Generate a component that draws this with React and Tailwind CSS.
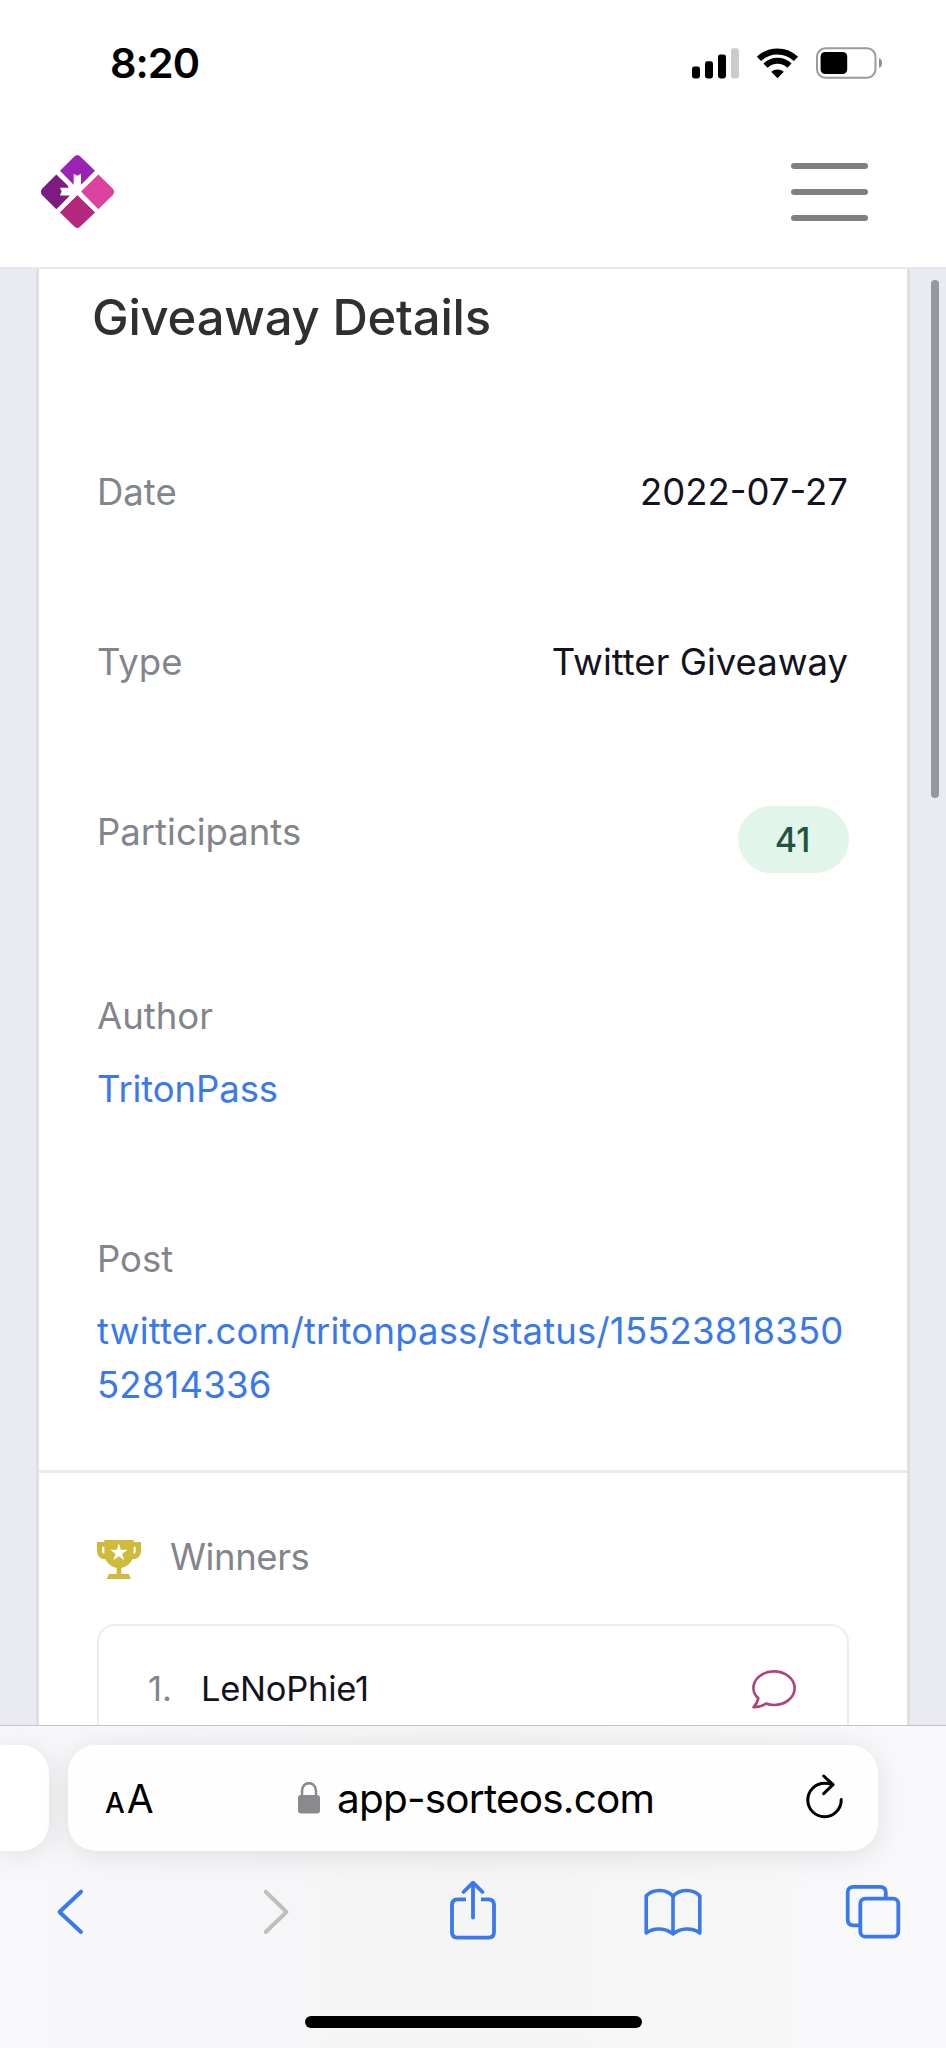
import React from "react";

const details = [
  { label: "Date", value: "2022-07-27" },
  { label: "Type", value: "Twitter Giveaway" },
];

const winners = [{ id: 1, name: "LeNoPhie1" }];

const StatusBar = () => (
  <div className="h-[126px] pl-[110px] pr-[64px] flex items-center justify-between text-black">
    <span className="text-[41.5px] leading-[50px] font-semibold tracking-[-1px]">8:20</span>
    <svg width="190" height="32" viewBox="0 0 190 32">
      <rect x="0" y="19.5" width="8" height="12" rx="2.4" />
      <rect x="13" y="14.3" width="8" height="17.2" rx="2.4" />
      <rect x="26" y="7.5" width="8" height="24" rx="2.4" />
      <rect x="39" y="1.3" width="8" height="30.2" rx="2.4" fill="#cbcbcb" />
      <g fill="none" stroke="#000" strokeWidth="6">
        <path d="M67 11.9A26.6 26.6 0 0 1 104 11.9" />
        <path d="M73.5 18.6A17.2 17.2 0 0 1 97.5 18.6" />
      </g>
      <path d="M85.5 31.2L79.2 24.8A9.5 9.5 0 0 1 91.8 24.8Z" />
      <rect x="125" y="1.3" width="58.5" height="29.5" rx="8.5" fill="none" stroke="#9b9b9b" strokeWidth="2" />
      <rect x="128.6" y="5" width="26.6" height="22" rx="4.5" />
      <path d="M187 11C189.5 12 190 14 190 16C190 18 189.5 20 187 21Z" fill="#8f8f8f" />
    </svg>
  </div>
);

const Logo = () => (
  <svg width="75" height="75" viewBox="120 462.5 225 225">
    <path d="M180 513L223 470Q232 461 241 470L285 513L232 566Z" fill="#9a23b5" />
    <path d="M169 524L222 575L169 628L127 586Q118 576 127 566Z" fill="#7d1c7e" />
    <path d="M295 524L338 566Q347 576 338 586L295 628L243 575Z" fill="#dc429d" />
    <path d="M232 586L285 638L241 680Q232 689 223 680L180 638Z" fill="#b4297f" />
    <path d="M221 522L232 528L243 522V555L252 560L216 598L208 587H180L185 575L180 564H206L203 557L208 551L221 557Z" fill="#fff" />
    <path d="M232 587L285 638H180Z" fill="#b4297f" />
  </svg>
);

const Header = () => (
  <header className="h-[143px] pl-10 pr-[78px] pb-[10px] flex items-center justify-between border-b-2 border-[#e9e9eb]">
    <Logo />
    <div className="w-[77px] flex flex-col gap-[20px]">
      <span className="h-[6px] rounded-full bg-[#808080]" />
      <span className="h-[6px] rounded-full bg-[#808080]" />
      <span className="h-[6px] rounded-full bg-[#808080]" />
    </div>
  </header>
);

const Trophy = () => (
  <svg width="44" height="39" viewBox="291 123 132 117" className="mt-[5px]">
    <path
      fill="#cfba3c"
      fillRule="evenodd"
      d="M313 123H401V129H423V155Q423 180 397 181Q388 202 364 207V225H386L393 240H320L327 225H350V207Q326 202 316 181Q291 179 291 155V129H313ZM313 143H306V158Q307 163 313 165ZM401 143V165Q407 163 407 158V143ZM356.5 133L350.5 152H330L346.5 164L340 184L356.5 172L373 184L366.5 164L383 152H362.5Z"
    />
  </svg>
);

const CommentIcon = () => (
  <svg width="44" height="39" viewBox="0 0 44 39" fill="none" stroke="#ad4379" strokeWidth="2.6" strokeLinejoin="round">
    <path d="M22 1.4C33.3 1.4 42.6 8.8 42.6 18.2C42.6 27.6 33.3 35 22 35C19 35 16.4 34.5 13.9 33.5C10.5 36 6.5 37.4 1.4 37.3C4 34.7 5.7 31.5 6.3 28.3C3.2 25.4 1.4 22 1.4 18.2C1.4 8.8 10.7 1.4 22 1.4Z" />
  </svg>
);

const GiveawayCard = () => (
  <div className="w-[868px] h-full box-content bg-white border-x-[3px] border-[#e0e0e3] overflow-hidden text-[36.5px] leading-[54px]">
    <h1 className="pt-[19px] pl-[53px] text-[49px] leading-[60px] font-medium tracking-[-0.2px] text-[#303030]">
      Giveaway Details
    </h1>

    <div className="px-[58px] pt-[117px]">
      {details.map((item) => (
        <div key={item.label} className="h-[170px] flex justify-between">
          <span className="text-[#82858c]">{item.label}</span>
          <span className="text-[#12131f] pr-[1px]">{item.value}</span>
        </div>
      ))}
      <div className="h-[184px] flex items-start justify-between">
        <span className="text-[#82858c]">Participants</span>
        <span className="mt-[1px] w-[111px] h-[67px] pr-[2px] rounded-full bg-[#e1f5ea] text-[#22533f] text-[34px] font-medium flex items-center justify-center">
          41
        </span>
      </div>
      <div className="h-[243px]">
        <p className="text-[#82858c]">Author</p>
        <a className="block mt-[18.5px] text-[#3a78ee] tracking-[-0.1px]">TritonPass</a>
      </div>
      <div className="h-[238px]">
        <p className="text-[#82858c]">Post</p>
        <a className="block mt-[19px] leading-[53.5px] text-[#3a78ee] tracking-[0.17px] break-all">
          twitter.com/tritonpass/status/1552381835052814336
        </a>
      </div>
    </div>

    <div className="border-t-[3px] border-[#e9e9ea] px-[58px] pt-[57px]">
      <div className="flex items-center gap-[29px] text-[#82858c]">
        <Trophy />
        <span className="tracking-[-0.4px]">Winners</span>
      </div>
      <div className="mt-[40px] h-[180px] border-2 border-[#ededee] rounded-[18px] pl-[49px] pr-[51px] pt-[36px] text-[34.5px]">
        {winners.map((winner) => (
          <div key={winner.id} className="flex items-center">
            <span className="w-[53px] text-[#82858c]">{winner.id}.</span>
            <span className="flex-1 text-[#12131f] tracking-[-0.25px]">{winner.name}</span>
            <CommentIcon />
          </div>
        ))}
      </div>
    </div>
  </div>
);

const AddressBar = () => (
  <div className="flex gap-[19px] pt-[19px]">
    <div className="w-[49px] h-[106px] bg-white rounded-r-[28px] shadow-[0_4px_30px_rgba(0,0,0,0.1)]" />
    <div className="w-[810px] h-[106px] bg-[#fefefe] rounded-[28px] shadow-[0_4px_30px_rgba(0,0,0,0.1)] pl-[37px] pr-[35px] flex items-center text-black">
      <span className="w-[193px] flex items-baseline gap-[2px] leading-none">
        <span className="text-[28px] font-medium">A</span>
        <span className="text-[39px]">A</span>
      </span>
      <svg width="22" height="32" viewBox="0 0 22 32">
        <path d="M4 15V9C4 -1.5 18 -1.5 18 9V15" fill="none" stroke="#8a8a8e" strokeWidth="2.5" />
        <rect x="0" y="13" width="22" height="18.5" rx="3" fill="#8a8a8e" />
      </svg>
      <span className="flex-1 pl-[17px] pt-[1px] text-[40.5px] leading-[50px] tracking-[-0.8px]">app-sorteos.com</span>
      <svg
        width="37"
        height="46"
        viewBox="0 0 37 46"
        fill="none"
        stroke="#000"
        strokeWidth="3"
        strokeLinecap="round"
        strokeLinejoin="round"
        className="mb-[5px]"
      >
        <path d="M35.2 26.5A16.7 16.7 0 1 1 18.5 10.3Q23 10.3 26.5 11.5" />
        <path d="M17.7 3L27 11.7L17.7 20.7" />
      </svg>
    </div>
  </div>
);

const Toolbar = () => (
  <div className="mt-[28px] px-[43px] flex justify-between">
    <svg width="60" height="64" viewBox="0 0 60 64" fill="none" stroke="#3a78ee" strokeWidth="4" strokeLinecap="round" strokeLinejoin="round">
      <path d="M38 12.7L16.5 33L38 53" />
    </svg>
    <svg width="60" height="64" viewBox="0 0 60 64" fill="none" stroke="#bfbfc0" strokeWidth="4" strokeLinecap="round" strokeLinejoin="round">
      <path d="M22.7 12.7L43.5 33L22.7 53" />
    </svg>
    <svg width="60" height="64" viewBox="0 0 60 64" fill="none" stroke="#3a78ee" strokeWidth="3.8" strokeLinecap="round" strokeLinejoin="round">
      <path d="M30 38.5V4.5M20.5 13L30 3.7L39.5 13" />
      <path strokeLinecap="butt" d="M23 20.3H14.5Q9 20.3 9 26V53Q9 58.7 14.5 58.7H45.5Q51 58.7 51 53V26Q51 20.3 45.5 20.3H38" />
    </svg>
    <svg width="60" height="64" viewBox="0 0 60 64" fill="none" stroke="#3a78ee" strokeWidth="3.6" strokeLinecap="round" strokeLinejoin="round">
      <path d="M30 17.5C24 9.5 9.5 9.5 3.2 17V54C10.5 48.5 22.5 48.5 30 55C37.5 48.5 49.5 48.5 56.8 54V17C50.5 9.5 36 9.5 30 17.5ZM30 17.5V54" />
    </svg>
    <svg width="60" height="64" viewBox="0 0 60 64" fill="none" stroke="#3a78ee" strokeWidth="3.8" strokeLinejoin="round">
      <rect x="17.3" y="19.7" width="38" height="38" rx="5" />
      <path d="M17.3 46.3H10.5Q4.7 46.3 4.7 40.5V13.5Q4.7 7.9 10.5 7.9H37Q42.8 7.9 42.8 13.5V19.7" />
    </svg>
  </div>
);

const App = () => {
  return (
    <div className="w-[946px] h-[2048px] overflow-hidden flex flex-col bg-white font-['Inter',sans-serif]">
      <StatusBar />
      <Header />

      <main className="relative h-[1456px] pl-[36px] bg-[#eaeaf3] overflow-hidden">
        <GiveawayCard />
        {/* scroll indicator over the page */}
        <div className="absolute top-[11px] right-[7px] w-[8px] h-[518px] rounded-full bg-[#9797a0]" />
      </main>

      <footer className="h-[323px] border-t border-[#c3c3c8] bg-linear-to-r from-[#f8f8fb] via-[#f5f5f6] to-[#f9f9fb] flex flex-col overflow-hidden">
        <AddressBar />
        <Toolbar />
        <div className="mt-[73px] w-[337px] h-[12px] self-center rounded-full bg-black" />
      </footer>
    </div>
  );
};

export default App;
